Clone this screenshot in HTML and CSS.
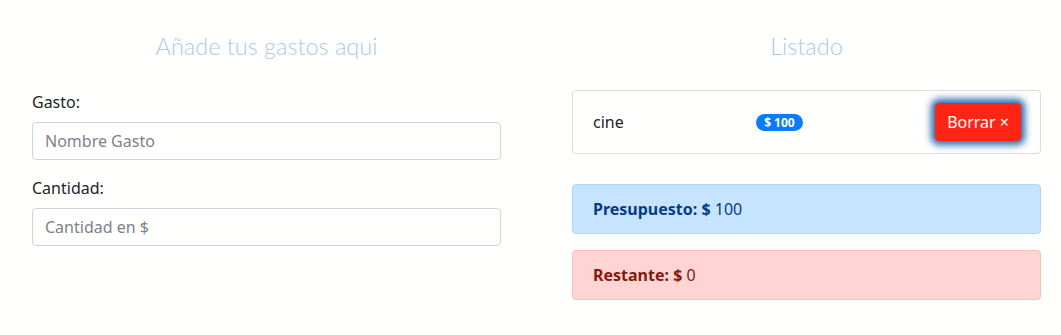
FILE: index.html
```html
<!DOCTYPE html>
<html lang="es">
<head>
<meta charset="utf-8">
<title>Gasto semanal</title>
<link rel="stylesheet" href="styles.css">
</head>
<body>
<main class="page">
  <section class="col">
    <h2 class="title">Añade tus gastos aqui</h2>
    <form class="form">
      <div class="field">
        <label class="label" for="gasto">Gasto:</label>
        <input class="input" id="gasto" type="text" placeholder="Nombre Gasto">
      </div>
      <div class="field">
        <label class="label" for="cantidad">Cantidad:</label>
        <input class="input" id="cantidad" type="text" placeholder="Cantidad en $">
      </div>
    </form>
  </section>
  <section class="col">
    <h2 class="title">Listado</h2>
    <ul class="list">
      <li class="item">
        <span class="name">cine</span>
        <span class="badge">$ 100</span>
        <button class="btn-delete" type="button">Borrar &times;</button>
      </li>
    </ul>
    <div class="alert alert-primary"><strong>Presupuesto: $</strong> 100</div>
    <div class="alert alert-danger"><strong>Restante: $</strong> 0</div>
  </section>
</main>
</body>
</html>
```
FILE: styles.css
```css
* { box-sizing: border-box; }
html, body { margin: 0; padding: 0; }
body {
  background: #fffffd;
  color: #212529;
  font-family: "Noto Sans", "Open Sans", Arial, sans-serif;
  font-size: 16px;
  line-height: 1.5;
}
.page {
  display: grid;
  grid-template-columns: 469px 469px;
  column-gap: 71px;
  padding: 32px 0 0 32px;
}
.title {
  margin: 0 0 29px;
  text-align: center;
  font-family: "Lato", "Open Sans", sans-serif;
  font-weight: 300;
  font-size: 23.5px;
  line-height: 29px;
  color: #a9cbe8;
}
.field { margin-bottom: 16px; }
.label {
  display: block;
  margin-bottom: 8px;
  line-height: 24px;
}
.input {
  display: block;
  width: 100%;
  height: 38px;
  padding: 6px 12px;
  font: inherit;
  color: #495057;
  background: #fffffd;
  border: 1px solid #ced4da;
  border-radius: 4px;
}
.input::placeholder { color: #7b838b; }
.list {
  list-style: none;
  margin: 0 0 30px;
  padding: 0;
}
.item {
  display: flex;
  justify-content: space-between;
  align-items: center;
  padding: 12px 19px 12px 20px;
  border: 1px solid #dcdcdc;
  border-radius: 4px;
}
.badge {
  display: inline-block;
  padding: 1px 8px;
  font-size: 12px;
  font-weight: 700;
  line-height: 15px;
  color: #fff;
  background: #0a7bff;
  border-radius: 10px;
}
.btn-delete {
  font: inherit;
  line-height: 24px;
  padding: 6px 11px;
  color: #fff;
  background: #ff2414;
  border: 1px solid #ff2414;
  border-radius: 4px;
  box-shadow: 0 0 7px 4px rgba(28, 98, 168, 0.95);
}
.alert {
  padding: 12px 20px;
  margin-bottom: 16px;
  border: 1px solid transparent;
  border-radius: 4px;
  line-height: 24px;
}
.alert strong { font-weight: 700; }
.alert-primary {
  color: #063c82;
  background: #c6e4ff;
  border-color: #aed6ff;
}
.alert-danger {
  color: #86180e;
  background: #fed5d3;
  border-color: #fcc0bc;
}
```
